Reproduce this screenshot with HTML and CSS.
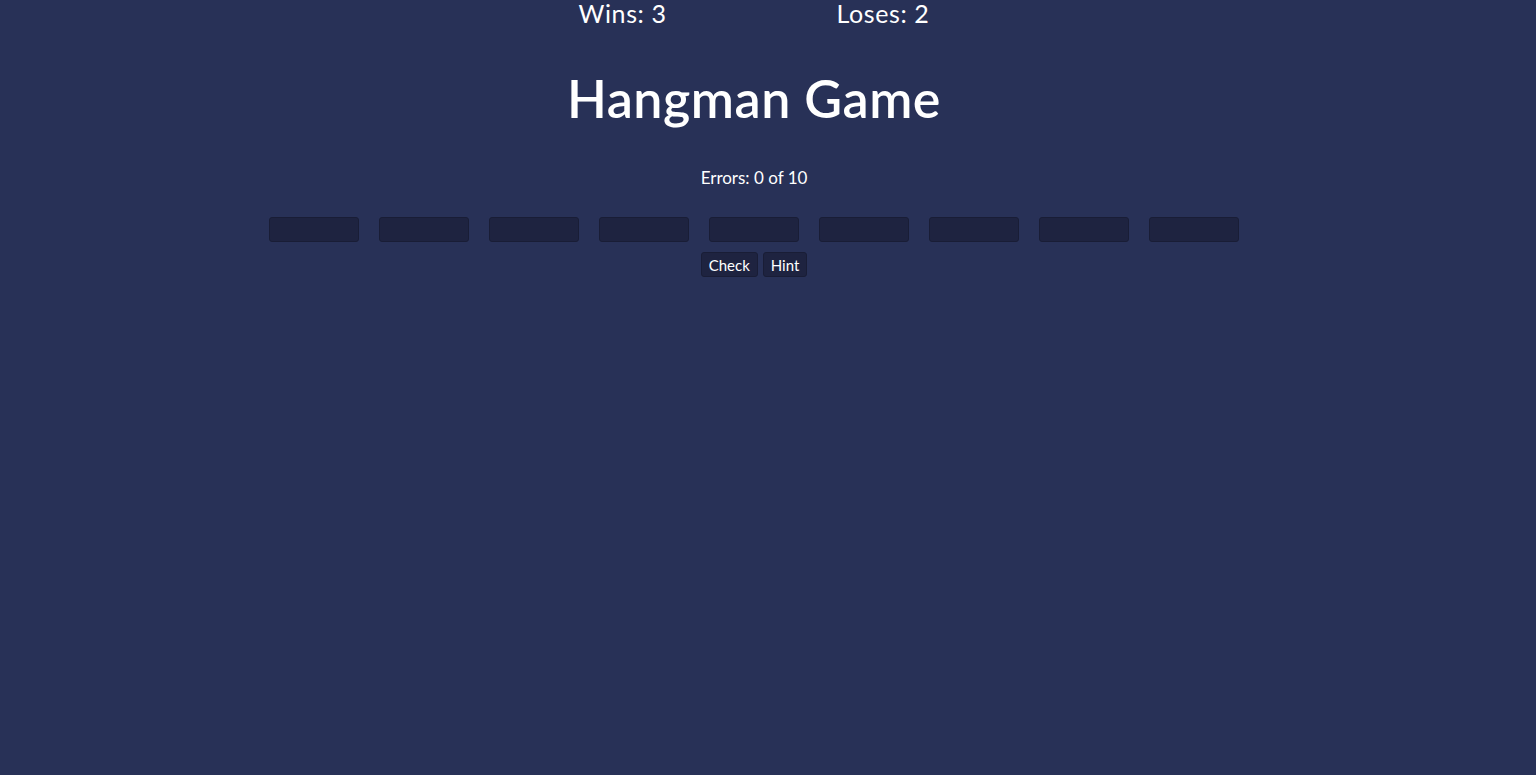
FILE: index.html
```html
<!DOCTYPE html>
<html lang="en">
<head>
<meta charset="utf-8">
<title>Hangman Game</title>
<link rel="stylesheet" href="styles.css">
</head>
<body>
<main class="app">
  <div class="score">
    <span class="score-item">Wins: 3</span>
    <span class="score-item">Loses: 2</span>
  </div>
  <h1 class="title">Hangman Game</h1>
  <p class="errors">Errors: 0 of 10</p>
  <div class="letters">
    <input class="letter" type="text">
    <input class="letter" type="text">
    <input class="letter" type="text">
    <input class="letter" type="text">
    <input class="letter" type="text">
    <input class="letter" type="text">
    <input class="letter" type="text">
    <input class="letter" type="text">
    <input class="letter" type="text">
  </div>
  <div class="actions">
    <button class="btn">Check</button>
    <button class="btn">Hint</button>
  </div>
</main>
</body>
</html>
```

FILE: styles.css
```css
html, body {
  margin: 0;
  padding: 0;
  background: #283157;
  color: #ffffff;
  font-family: "Lato", "Open Sans", sans-serif;
}
body {
  min-height: 775px;
}
.app {
  display: flex;
  flex-direction: column;
  align-items: center;
  padding-right: 28px;
}
.score {
  display: flex;
  gap: 170px;
  font-size: 25px;
  letter-spacing: 0.6px;
  line-height: 26px;
  margin-top: 0;
}
.title {
  font-size: 52px;
  font-weight: 600;
  margin: 42px 0 0;
  line-height: 60px;
  letter-spacing: 0.5px;
}
.errors {
  font-size: 17px;
  margin: 40px 0 0;
  line-height: 20px;
}
.letters {
  display: flex;
  gap: 20px;
  margin-top: 29px;
}
.letter {
  width: 90px;
  height: 25px;
  box-sizing: border-box;
  background: #1e2340;
  border: 1px solid #191d36;
  border-radius: 3px;
  padding: 0;
  outline: none;
}
.actions {
  display: flex;
  gap: 5px;
  margin-top: 10px;
}
.btn {
  height: 25px;
  box-sizing: border-box;
  background: #1e2340;
  color: #ffffff;
  border: 1px solid #191d36;
  border-radius: 3px;
  font-family: "Lato", "Open Sans", sans-serif;
  font-size: 15px;
  padding: 0 7px;
  cursor: pointer;
}
```
